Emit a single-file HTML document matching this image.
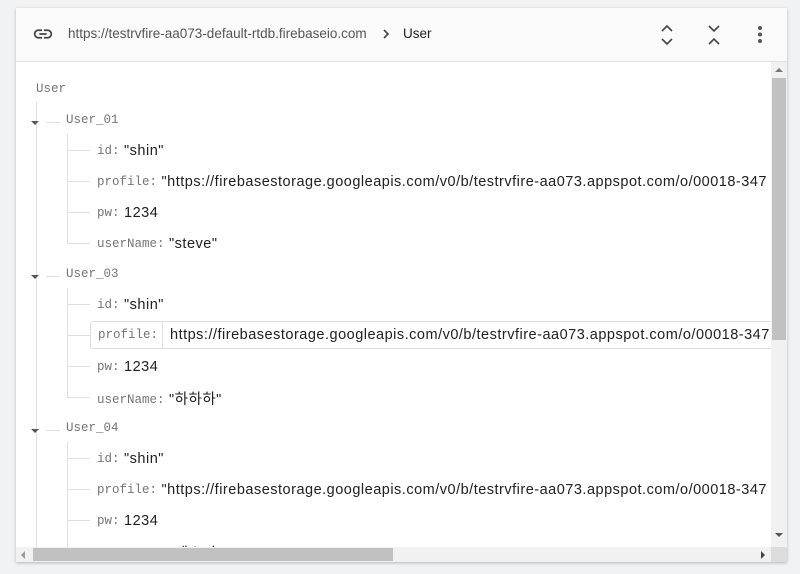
<!DOCTYPE html>
<html><head><meta charset="utf-8"><style>
body{margin:0;width:800px;height:574px;background:#f1f2f3;position:relative;overflow:hidden;font-family:"Liberation Sans","Noto Sans CJK KR",sans-serif}
.card{position:absolute;left:16px;top:8px;width:771px;height:554px;background:#fff;box-shadow:0 1px 3px rgba(0,0,0,.25)}
.hdr{position:absolute;left:0;top:0;width:771px;height:53px;background:#fafafa;border-bottom:1px solid #e0e0e0}
.url{position:absolute;left:52px;top:18px;font-size:13.5px;color:#555}
.crumb{position:absolute;left:387px;top:18px;font-size:13.5px;color:#212121}
.content{position:absolute;left:0;top:54px;width:755px;height:485px;overflow:hidden}
.r{position:absolute;white-space:nowrap;font-size:14.5px;letter-spacing:0.5px;color:#212121}
.m{position:absolute;white-space:nowrap;font-family:"Liberation Mono",monospace;font-size:12.5px;color:#757575}
.k{font-family:"Liberation Mono",monospace;font-size:12.5px;letter-spacing:0;color:#757575;position:relative;top:-1px;margin-right:-3px}
.vl{position:absolute;width:1px;background:#e0e0e0}
.hl{position:absolute;height:1px;background:#e0e0e0}
.vs{position:absolute;left:755px;top:54px;width:16px;height:485px;background:#f1f1f1}
.hs{position:absolute;left:0;top:539px;width:755px;height:15px;background:#f1f1f1}
.corner{position:absolute;left:755px;top:539px;width:16px;height:15px;background:#dcdcdc}
.tri{position:absolute;width:0;height:0}
</style></head><body>
<div class="card">
 <div class="hdr">
  <svg style="position:absolute;left:16px;top:15px" width="22" height="22" viewBox="0 0 24 24"><path d="M3.9 12c0-1.71 1.39-3.1 3.1-3.1h4V7H7c-2.76 0-5 2.24-5 5s2.24 5 5 5h4v-1.9H7c-1.71 0-3.1-1.39-3.1-3.1zM8 13h8v-2H8v2zm9-6h-4v1.9h4c1.71 0 3.1 1.39 3.1 3.1s-1.39 3.1-3.1 3.1h-4V17h4c2.76 0 5-2.24 5-5s-2.24-5-5-5z" fill="#444"/></svg>
  <div class="url">https://testrvfire-aa073-default-rtdb.firebaseio.com</div>
  <svg style="position:absolute;left:365px;top:20px" width="10" height="12" viewBox="0 0 10 12"><path d="M3 2l4 4-4 4" stroke="#444" stroke-width="1.6" fill="none"/></svg>
  <div class="crumb">User</div>
  <svg style="position:absolute;left:643px;top:15px" width="16" height="24" viewBox="0 0 16 24"><path d="M3 8l5-5 5 5M3 16l5 5 5-5" stroke="#444" stroke-width="1.6" fill="none"/></svg>
  <svg style="position:absolute;left:690px;top:15px" width="16" height="24" viewBox="0 0 16 24"><path d="M3 3l5 5 5-5M3 21l5-5 5 5" stroke="#444" stroke-width="1.6" fill="none"/></svg>
  <svg style="position:absolute;left:740px;top:17px" width="8" height="20" viewBox="0 0 8 20"><circle cx="4" cy="3" r="2" fill="#555"/><circle cx="4" cy="9.5" r="2" fill="#555"/><circle cx="4" cy="16" r="2" fill="#555"/></svg>
 </div>
 <div class="content">
  <div class="m" style="left:20px;top:20px">User</div>
  <div class="vl" style="left:20px;top:40px;height:460px"></div>
  <div class="tri" style="left:15px;top:59px;border-left:4px solid transparent;border-right:4px solid transparent;border-top:4px solid #555"></div>
  <div class="hl" style="left:30px;top:60px;width:14px"></div>
  <div class="m" style="left:50px;top:51px">User_01</div>
  <div class="vl" style="left:51px;top:72px;height:110px"></div>
  <div class="hl" style="left:52px;top:88px;width:22px"></div><div class="r" style="left:81px;top:81px"><span class="k">id: </span>"shin"</div>
  <div class="hl" style="left:52px;top:119px;width:22px"></div><div class="r" style="left:81px;top:112px"><span class="k">profile: </span>"https://firebasestorage.googleapis.com/v0/b/testrvfire-aa073.appspot.com/o/00018-347</div>
  <div class="hl" style="left:52px;top:150px;width:22px"></div><div class="r" style="left:81px;top:143px"><span class="k">pw: </span>1234</div>
  <div class="hl" style="left:52px;top:181px;width:22px"></div><div class="r" style="left:81px;top:174px"><span class="k">userName: </span>"steve"</div>
  <div class="tri" style="left:15px;top:213px;border-left:4px solid transparent;border-right:4px solid transparent;border-top:4px solid #555"></div>
  <div class="hl" style="left:30px;top:214px;width:14px"></div>
  <div class="m" style="left:50px;top:205px">User_03</div>
  <div class="vl" style="left:51px;top:226px;height:110px"></div>
  <div class="hl" style="left:52px;top:242px;width:22px"></div><div class="r" style="left:81px;top:235px"><span class="k">id: </span>"shin"</div>
  <div class="hl" style="left:52px;top:273px;width:22px"></div>
  <div class="r" style="left:74px;top:259px;height:26px;width:700px;border:1px solid #dadce0;border-radius:3px;background:#fff"><span class="k" style="position:absolute;left:7px;top:6px">profile:</span><div style="position:absolute;left:71px;top:0;width:1px;height:26px;background:#e0e0e0"></div><span style="position:absolute;left:79px;top:5px">https://firebasestorage.googleapis.com/v0/b/testrvfire-aa073.appspot.com/o/00018-347</span></div>
  <div class="hl" style="left:52px;top:304px;width:22px"></div><div class="r" style="left:81px;top:297px"><span class="k">pw: </span>1234</div>
  <div class="hl" style="left:52px;top:335px;width:22px"></div><div class="r" style="left:81px;top:326px"><span class="k">userName: </span>"하하하"</div>
  <div class="tri" style="left:15px;top:367px;border-left:4px solid transparent;border-right:4px solid transparent;border-top:4px solid #555"></div>
  <div class="hl" style="left:30px;top:368px;width:14px"></div>
  <div class="m" style="left:50px;top:359px">User_04</div>
  <div class="vl" style="left:51px;top:380px;height:120px"></div>
  <div class="hl" style="left:52px;top:396px;width:22px"></div><div class="r" style="left:81px;top:389px"><span class="k">id: </span>"shin"</div>
  <div class="hl" style="left:52px;top:427px;width:22px"></div><div class="r" style="left:81px;top:420px"><span class="k">profile: </span>"https://firebasestorage.googleapis.com/v0/b/testrvfire-aa073.appspot.com/o/00018-347</div>
  <div class="hl" style="left:52px;top:458px;width:22px"></div><div class="r" style="left:81px;top:451px"><span class="k">pw: </span>1234</div>
  <div class="hl" style="left:52px;top:489px;width:22px"></div><div class="r" style="left:81px;top:480px"><span class="k">userName: </span>"테스터01"</div>
 </div>
 <div class="vs">
  <div class="tri" style="left:4px;top:6px;border-left:4px solid transparent;border-right:4px solid transparent;border-bottom:4px solid #777"></div>
  <div style="position:absolute;left:1px;top:16px;width:14px;height:262px;background:#c1c1c1"></div>
  <div class="tri" style="left:4px;top:471px;border-left:4px solid transparent;border-right:4px solid transparent;border-top:4px solid #555"></div>
 </div>
 <div class="hs">
  <div class="tri" style="left:5px;top:4px;border-top:4px solid transparent;border-bottom:4px solid transparent;border-right:4px solid #999"></div>
  <div style="position:absolute;left:17px;top:1px;width:360px;height:13px;background:#c1c1c1"></div>
  <div class="tri" style="left:745px;top:4px;border-top:4px solid transparent;border-bottom:4px solid transparent;border-left:4px solid #444"></div>
 </div>
 <div class="corner"></div>
</div>
</body></html>
